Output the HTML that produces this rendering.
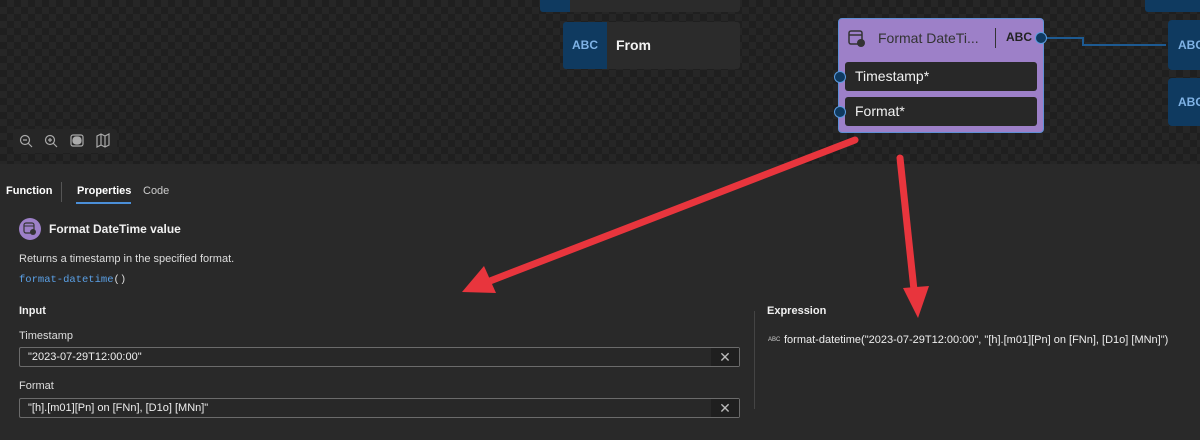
<!DOCTYPE html>
<html><head><meta charset="utf-8"><style>
*{margin:0;padding:0;box-sizing:border-box}
body{width:1200px;height:440px;overflow:hidden;background:#292929;font-family:"Liberation Sans",sans-serif;color:#e6e6e6;position:relative}
.a{position:absolute}
.canvas{left:0;top:0;width:1200px;height:164px;background-color:#1f1f1f;background-image:linear-gradient(45deg,#262626 25%,transparent 25%,transparent 75%,#262626 75%),linear-gradient(45deg,#262626 25%,transparent 25%,transparent 75%,#262626 75%);background-size:14px 14px;background-position:0 0,7px 7px}
.band{left:0;top:163px;width:1200px;height:9px;background:#0d0d0d}
.node{background:#2b2b2b;border-radius:3px}
.blue{background:#0f3a60;color:#7fb2e5;font-size:12px;font-weight:bold}
.dot{width:12px;height:12px;border-radius:50%;background:#0f3a60;border:1.5px solid #5a9be0}
.row{background:#282828;border-radius:3px;color:#f2f2f2;font-size:14px;padding-left:10px;line-height:29px}
.t{font-size:11px;white-space:nowrap}
.box{border:1px solid #6b6b6b;background:#282828;height:20px;border-radius:2px}
.box span{position:absolute;left:8px;top:3px;font-size:11px;color:#eee}
.box i{position:absolute;right:0;top:0;width:28px;height:18px;background:#1f1f1f;font-style:normal;color:#bbb;font-size:14px;text-align:center;line-height:18px}
</style></head><body>
<div class="a canvas"></div>
<div class="a node" style="left:540px;top:-6px;width:200px;height:18px"></div>
<div class="a blue" style="left:540px;top:-6px;width:30px;height:18px;border-radius:3px 0 0 3px"></div>
<div class="a node" style="left:1145px;top:-6px;width:60px;height:18px;background:#0f3a60"></div>
<div class="a node" style="left:563px;top:22px;width:177px;height:47px"></div>
<div class="a blue" style="left:563px;top:22px;width:44px;height:47px;border-radius:3px 0 0 3px;line-height:47px;text-align:center">ABC</div>
<div class="a" style="left:616px;top:37px;font-size:14px;font-weight:bold;color:#f2f2f2">From</div>
<div class="a blue" style="left:1168px;top:20px;width:40px;height:50px;border-radius:4px;line-height:50px;padding-left:10px">ABC</div>
<div class="a blue" style="left:1168px;top:78px;width:40px;height:48px;border-radius:4px;line-height:48px;padding-left:10px">ABC</div>
<svg class="a" style="left:0;top:0" width="1200" height="170"><path d="M1046 38H1083V45H1166" stroke="#1d5a92" stroke-width="2" fill="none"/></svg>
<div class="a" style="left:838px;top:18px;width:206px;height:115px;background:#9d80c8;border:1.5px solid #5f8fd6;border-radius:4px"></div>
<svg class="a" style="left:847px;top:29px" width="20" height="20" viewBox="0 0 20 20"><rect x="2" y="2" width="13" height="13" rx="2" fill="none" stroke="#333" stroke-width="1.5"/><path d="M2 6H15" stroke="#333" stroke-width="1.5"/><circle cx="14" cy="14" r="4" fill="#333"/></svg>
<div class="a" style="left:878px;top:30px;font-size:14px;color:#333">Format DateTi...</div>
<div class="a" style="left:995px;top:28px;width:1px;height:20px;background:#333"></div>
<div class="a" style="left:1006px;top:30px;font-size:12px;font-weight:bold;color:#222">ABC</div>
<div class="a dot" style="left:1035px;top:32px"></div>
<div class="a row" style="left:845px;top:62px;width:192px;height:29px">Timestamp*</div>
<div class="a row" style="left:845px;top:97px;width:192px;height:29px">Format*</div>
<div class="a dot" style="left:834px;top:71px"></div>
<div class="a dot" style="left:834px;top:106px"></div>
<div class="a" style="left:13px;top:129px;width:104px;height:24px;background:#262626;border-radius:3px"></div>
<svg class="a" style="left:18px;top:133px" width="96" height="16" viewBox="0 0 96 16" fill="none" stroke="#aaa" stroke-width="1.2"><circle cx="7" cy="7" r="4.5"/><path d="M10 10L14 14M5 7H9"/><circle cx="32" cy="7" r="4.5"/><path d="M35 10L39 14M30 7H34M32 5V9"/><rect x="53" y="2" width="12" height="11" rx="2"/><rect x="55" y="4" width="8" height="7" rx="3" fill="#aaa"/><path d="M79 3L83 1L87 3L91 1V12L87 14L83 12L79 14ZM83 1V12M87 3V14"/></svg>
<div class="a" style="left:6px;top:185px;font-size:11px;font-weight:bold;color:#fff">Function</div>
<div class="a" style="left:61px;top:182px;width:1px;height:20px;background:#555"></div>
<div class="a" style="left:77px;top:185px;font-size:11px;font-weight:bold;color:#fff">Properties</div>
<div class="a" style="left:76px;top:202px;width:55px;height:2px;background:#4b8fd8"></div>
<div class="a" style="left:143px;top:185px;font-size:11px;color:#ccc">Code</div>
<div class="a" style="left:19px;top:218px;width:22px;height:22px;border-radius:50%;background:#9d80c8"></div>
<svg class="a" style="left:23px;top:222px" width="14" height="14" viewBox="0 0 14 14"><rect x="1" y="1" width="10" height="10" rx="2" fill="none" stroke="#333" stroke-width="1.2"/><path d="M1 4H11" stroke="#333"/><circle cx="10" cy="10" r="3" fill="#333"/></svg>
<div class="a" style="left:49px;top:222px;font-size:12px;font-weight:bold;color:#f0f0f0">Format DateTime value</div>
<div class="a t" style="left:19px;top:253px;color:#ddd">Returns a timestamp in the specified format.</div>
<div class="a" style="left:19px;top:274px;font-family:'Liberation Mono',monospace;font-size:10.5px;color:#5aa0e6">format-datetime<span style="color:#ddd">()</span></div>
<div class="a t" style="left:19px;top:305px;font-weight:bold;color:#f0f0f0">Input</div>
<div class="a t" style="left:19px;top:330px;color:#ddd">Timestamp</div>
<div class="a box" style="left:19px;top:347px;width:721px"><span>"2023-07-29T12:00:00"</span><i>✕</i></div>
<div class="a t" style="left:19px;top:380px;color:#ddd">Format</div>
<div class="a box" style="left:19px;top:398px;width:721px"><span>"[h].[m01][Pn] on [FNn], [D1o] [MNn]"</span><i>✕</i></div>
<div class="a" style="left:754px;top:311px;width:1px;height:98px;background:#444"></div>
<div class="a t" style="left:767px;top:305px;font-weight:bold;color:#f0f0f0">Expression</div>
<div class="a" style="left:768px;top:337px;font-size:6px;color:#ccc">ABC</div>
<div class="a t" style="left:784px;top:334px;color:#eee">format-datetime("2023-07-29T12:00:00", "[h].[m01][Pn] on [FNn], [D1o] [MNn]")</div>
<svg class="a" style="left:0;top:0" width="1200" height="440"><g stroke="#e8353d" stroke-width="7" stroke-linecap="round" fill="#e8353d"><path d="M855 140L490 281"/><path d="M900 158L914 290"/></g><path d="M462 292L484 266L496 293Z" fill="#e8353d"/><path d="M918 318L903 288L929 286Z" fill="#e8353d"/></svg>
</body></html>
